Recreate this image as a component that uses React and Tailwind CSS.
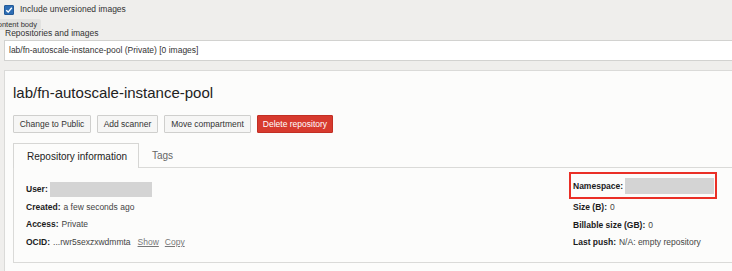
import React from "react";

const font = { fontFamily: '"Liberation Sans", Arial, sans-serif' };

function Checkbox() {
  return (
    <div className="w-[10px] h-[10px] rounded-[1px] bg-[#2d6db5] border border-[#245a97] flex items-center justify-center">
      <svg width="8" height="8" viewBox="0 0 8 8">
        <path d="M1.2 4.2 L3.2 6.1 L6.8 1.8" fill="none" stroke="#fff" strokeWidth="1.4" />
      </svg>
    </div>
  );
}

function Button({ children, danger, w }) {
  return (
    <button
      className={
        (danger
          ? "h-[18px] text-[8.5px] leading-none rounded-[1px] border border-[#c22f24] bg-[#d73a2e] text-white "
          : "h-[18px] text-[8.5px] leading-none rounded-[1px] border border-[#cfcfcd] bg-[#f6f6f5] text-[#333] ") + w
      }
    >
      {children}
    </button>
  );
}

function Field({ label, children }) {
  return (
    <div className="h-[17.5px] flex items-center text-[8.5px] text-[#444]">
      <strong className="font-bold text-[#1b1b1b]">{label}</strong>
      <span className="ml-[3px]">{children}</span>
    </div>
  );
}

export default function App() {
  return (
    <div className="relative w-[732px] h-[271px] overflow-hidden bg-[#efeeec]" style={font}>
      {/* include unversioned */}
      <div className="h-[19px] pl-[4px] flex items-center gap-[6px]">
        <Checkbox />
        <span className="text-[8.5px] text-[#333]">Include unversioned images</span>
      </div>

      <div className="h-[21px] pl-[5px] pt-[9px] text-[8.5px] leading-[11px] text-[#333]">
        Repositories and images
      </div>

      {/* tooltip */}
      <div className="absolute left-[-7px] top-[19px] h-[11px] pl-[1px] pr-[4px] flex items-center bg-[#e2e2e0] rounded-[2px] text-[7.5px] text-[#333]">
        content body
      </div>

      <div className="ml-[4px] w-[760px] h-[21px] flex items-center pl-[4px] bg-white border border-[#d2d2d0] text-[8.5px] text-[#333]">
        lab/fn-autoscale-instance-pool (Private) [0 images]
      </div>

      {/* card */}
      <div className="mt-[9px] ml-[4px] w-[780px] bg-[#fcfcfb] border border-[#dadad8] pl-[8px] pt-[13px] pb-[20px]">
        <h1 className="text-[15px] leading-[18px] text-[#222]">lab/fn-autoscale-instance-pool</h1>

        <div className="mt-[13px] flex gap-[6px]">
          <Button w="w-[78px]">Change to Public</Button>
          <Button w="w-[61px]">Add scanner</Button>
          <Button w="w-[87px]">Move compartment</Button>
          <Button danger w="w-[76px]">Delete repository</Button>
        </div>

        {/* tabs */}
        <div className="mt-[10px] flex">
          <div className="relative z-10 -mb-px w-[126px] h-[25px] pl-[13px] flex items-center bg-[#fcfcfb] border border-b-0 border-[#d6d6d4] text-[10px] text-[#222]">
            Repository information
          </div>
          <div className="h-[24px] px-[13px] flex items-center text-[10px] text-[#666]">Tags</div>
        </div>

        <div className="border-t border-l border-b border-[#dadad8] h-[96px] pl-[12px] flex">
          <div className="w-[547px] pt-[13px]">
            <div className="h-[17.5px] flex items-center text-[8.5px]">
              <strong className="font-bold text-[#1b1b1b]">User:</strong>
              <span className="ml-[2px] w-[102px] h-[15px] bg-[#d4d4d4]" />
            </div>
            <Field label="Created:">a few seconds ago</Field>
            <Field label="Access:">Private</Field>
            <div className="h-[17.5px] flex items-center text-[8.5px] text-[#444]">
              <strong className="font-bold text-[#1b1b1b]">OCID:</strong>
              <span className="ml-[3px]">...rwr5sexzxwdmmta</span>
              <span className="ml-[7px] underline text-[#777]">Show</span>
              <span className="ml-[6px] underline text-[#777]">Copy</span>
            </div>
          </div>

          <div className="pt-[10px]">
            <div className="relative h-[16px] mb-[5px] flex items-center text-[8.5px]">
              <strong className="font-bold text-[#1b1b1b]">Namespace:</strong>
              <span className="ml-[2px] w-[89px] h-[16px] bg-[#d4d4d4]" />
              <div className="absolute left-[-4px] top-[-6px] w-[148px] h-[27px] border-2 border-[#ea2f26]" />
            </div>
            <Field label="Size (B):">0</Field>
            <Field label="Billable size (GB):">0</Field>
            <Field label="Last push:">N/A: empty repository</Field>
          </div>
        </div>
      </div>
    </div>
  );
}
